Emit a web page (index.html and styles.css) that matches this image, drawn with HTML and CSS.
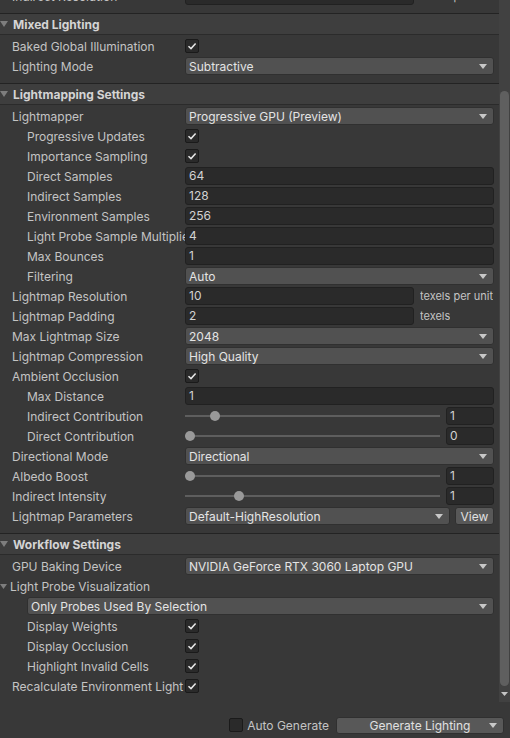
FILE: index.html
```html
<!DOCTYPE html>
<html>
<head>
<meta charset="utf-8">
<link rel="stylesheet" href="styles.css">
</head>
<body>
<div class="window">
  <div class="main">
    <div class="scrollview">
      <div class="content">
        <div class="row">
          <div class="label">Indirect Resolution</div>
          <div class="ctrl"><div class="field short">2</div><span class="unit">texels per unit</span></div>
        </div>

        <div class="header"><svg class="tri" width="8" height="6" viewBox="0 0 8 6"><path d="M0 0H8L4 6Z"/></svg>Mixed Lighting</div>
        <div class="row"><div class="label">Baked Global Illumination</div><div class="ctrl"><div class="check"><svg width="12" height="12" viewBox="0 0 12 12"><path d="M2.5 6.2L5 8.6L9.6 3.6"/></svg></div></div></div>
        <div class="row"><div class="label">Lighting Mode</div><div class="ctrl"><div class="dropdown"><span>Subtractive</span><svg class="arrow" width="8" height="5" viewBox="0 0 8 5"><path d="M0 0H8L4 5Z"/></svg></div></div></div>

        <div class="header"><svg class="tri" width="8" height="6" viewBox="0 0 8 6"><path d="M0 0H8L4 6Z"/></svg>Lightmapping Settings</div>
        <div class="row"><div class="label">Lightmapper</div><div class="ctrl"><div class="dropdown"><span>Progressive GPU (Preview)</span><svg class="arrow" width="8" height="5" viewBox="0 0 8 5"><path d="M0 0H8L4 5Z"/></svg></div></div></div>
        <div class="row"><div class="label ind">Progressive Updates</div><div class="ctrl"><div class="check"><svg width="12" height="12" viewBox="0 0 12 12"><path d="M2.5 6.2L5 8.6L9.6 3.6"/></svg></div></div></div>
        <div class="row"><div class="label ind">Importance Sampling</div><div class="ctrl"><div class="check"><svg width="12" height="12" viewBox="0 0 12 12"><path d="M2.5 6.2L5 8.6L9.6 3.6"/></svg></div></div></div>
        <div class="row"><div class="label ind">Direct Samples</div><div class="ctrl"><div class="field">64</div></div></div>
        <div class="row"><div class="label ind">Indirect Samples</div><div class="ctrl"><div class="field">128</div></div></div>
        <div class="row"><div class="label ind">Environment Samples</div><div class="ctrl"><div class="field">256</div></div></div>
        <div class="row"><div class="label ind">Light Probe Sample Multiplier</div><div class="ctrl"><div class="field">4</div></div></div>
        <div class="row"><div class="label ind">Max Bounces</div><div class="ctrl"><div class="field">1</div></div></div>
        <div class="row"><div class="label ind">Filtering</div><div class="ctrl"><div class="dropdown"><span>Auto</span><svg class="arrow" width="8" height="5" viewBox="0 0 8 5"><path d="M0 0H8L4 5Z"/></svg></div></div></div>
        <div class="row"><div class="label">Lightmap Resolution</div><div class="ctrl"><div class="field short">10</div><span class="unit">texels per unit</span></div></div>
        <div class="row"><div class="label">Lightmap Padding</div><div class="ctrl"><div class="field short">2</div><span class="unit">texels</span></div></div>
        <div class="row"><div class="label">Max Lightmap Size</div><div class="ctrl"><div class="dropdown"><span>2048</span><svg class="arrow" width="8" height="5" viewBox="0 0 8 5"><path d="M0 0H8L4 5Z"/></svg></div></div></div>
        <div class="row"><div class="label">Lightmap Compression</div><div class="ctrl"><div class="dropdown"><span>High Quality</span><svg class="arrow" width="8" height="5" viewBox="0 0 8 5"><path d="M0 0H8L4 5Z"/></svg></div></div></div>
        <div class="row"><div class="label">Ambient Occlusion</div><div class="ctrl"><div class="check"><svg width="12" height="12" viewBox="0 0 12 12"><path d="M2.5 6.2L5 8.6L9.6 3.6"/></svg></div></div></div>
        <div class="row"><div class="label ind">Max Distance</div><div class="ctrl"><div class="field">1</div></div></div>
        <div class="row"><div class="label ind">Indirect Contribution</div><div class="ctrl"><div class="slider"><div class="track"></div><div class="knob" style="--v:0.1"></div></div><div class="field value">1</div></div></div>
        <div class="row"><div class="label ind">Direct Contribution</div><div class="ctrl"><div class="slider"><div class="track"></div><div class="knob" style="--v:0"></div></div><div class="field value">0</div></div></div>
        <div class="row"><div class="label">Directional Mode</div><div class="ctrl"><div class="dropdown"><span>Directional</span><svg class="arrow" width="8" height="5" viewBox="0 0 8 5"><path d="M0 0H8L4 5Z"/></svg></div></div></div>
        <div class="row"><div class="label">Albedo Boost</div><div class="ctrl"><div class="slider"><div class="track"></div><div class="knob" style="--v:0"></div></div><div class="field value">1</div></div></div>
        <div class="row"><div class="label">Indirect Intensity</div><div class="ctrl"><div class="slider"><div class="track"></div><div class="knob" style="--v:0.2"></div></div><div class="field value">1</div></div></div>
        <div class="row"><div class="label">Lightmap Parameters</div><div class="ctrl"><div class="dropdown"><span>Default-HighResolution</span><svg class="arrow" width="8" height="5" viewBox="0 0 8 5"><path d="M0 0H8L4 5Z"/></svg></div><div class="btn view">View</div></div></div>

        <div class="header"><svg class="tri" width="8" height="6" viewBox="0 0 8 6"><path d="M0 0H8L4 6Z"/></svg>Workflow Settings</div>
        <div class="row"><div class="label">GPU Baking Device</div><div class="ctrl"><div class="dropdown"><span>NVIDIA GeForce RTX 3060 Laptop GPU</span><svg class="arrow" width="8" height="5" viewBox="0 0 8 5"><path d="M0 0H8L4 5Z"/></svg></div></div></div>
        <div class="row"><div class="foldout"><svg class="tri small" width="7" height="5" viewBox="0 0 7 5"><path d="M0 0H7L3.5 5Z"/></svg>Light Probe Visualization</div></div>
        <div class="row"><div class="ctrl wide"><div class="dropdown"><span>Only Probes Used By Selection</span><svg class="arrow" width="8" height="5" viewBox="0 0 8 5"><path d="M0 0H8L4 5Z"/></svg></div></div></div>
        <div class="row"><div class="label ind">Display Weights</div><div class="ctrl"><div class="check"><svg width="12" height="12" viewBox="0 0 12 12"><path d="M2.5 6.2L5 8.6L9.6 3.6"/></svg></div></div></div>
        <div class="row"><div class="label ind">Display Occlusion</div><div class="ctrl"><div class="check"><svg width="12" height="12" viewBox="0 0 12 12"><path d="M2.5 6.2L5 8.6L9.6 3.6"/></svg></div></div></div>
        <div class="row"><div class="label ind">Highlight Invalid Cells</div><div class="ctrl"><div class="check"><svg width="12" height="12" viewBox="0 0 12 12"><path d="M2.5 6.2L5 8.6L9.6 3.6"/></svg></div></div></div>
        <div class="row"><div class="label">Recalculate Environment Light</div><div class="ctrl"><div class="check"><svg width="12" height="12" viewBox="0 0 12 12"><path d="M2.5 6.2L5 8.6L9.6 3.6"/></svg></div></div></div>
      </div>
    </div>
    <div class="scrollbar">
      <div class="thumb"></div>
      <svg class="sarrow" width="7" height="4" viewBox="0 0 7 4"><path d="M0 0H7L3.5 4Z"/></svg>
    </div>
  </div>
  <div class="bottombar">
    <div class="check empty"></div>
    <span class="autogen">Auto Generate</span>
    <div class="btn generate"><span class="spacer"></span><span class="gtext">Generate Lighting</span><svg class="arrow" width="8" height="5" viewBox="0 0 8 5"><path d="M0 0H8L4 5Z"/></svg></div>
  </div>
</div>
</body>
</html>
```

FILE: styles.css
```css
* { box-sizing: border-box; }
html, body { margin: 0; padding: 0; }
body {
  background: #383838;
  font-family: Inter, "Noto Sans", sans-serif;
  font-size: 12px;
  color: #c4c4c4;
  width: 510px;
  height: 738px;
  overflow: hidden;
}
.window { display: flex; flex-direction: column; height: 738px; }
.main { display: flex; height: 702px; flex: none; }
.scrollview { flex: 1; overflow: hidden; }
.content { margin-top: -14px; }

.scrollbar {
  width: 11px;
  flex: none;
  background: #414141;
  display: flex;
  flex-direction: column;
  align-items: center;
}
.thumb {
  margin-top: 91px;
  width: 9px;
  height: 595px;
  background: #5f5f5f;
  border-radius: 5px;
}
.sarrow { margin-top: 6px; fill: #c4c4c4; }

.row { display: flex; align-items: center; height: 20px; }
.label {
  width: 185px;
  flex: none;
  padding-left: 12px;
  padding-right: 1px;
  white-space: nowrap;
  overflow: hidden;
}
.label.ind { padding-left: 27px; }
.ctrl { flex: 1; display: flex; align-items: center; margin-right: 5px; min-width: 0; }
.ctrl.wide { margin-left: 27px; }

.field {
  flex: 1;
  height: 18px;
  background: #2a2a2a;
  border: 1px solid #212121;
  border-radius: 3px;
  color: #d2d2d2;
  padding: 0 3px;
  line-height: 16px;
  white-space: nowrap;
}
.field.short { flex: none; width: 229px; }
.field.value { flex: none; width: 48px; margin-left: 6px; }
.unit { margin-left: 6px; white-space: nowrap; font-size: 11px; overflow: hidden; }

.dropdown {
  flex: 1;
  height: 18px;
  background: #515151;
  border: 1px solid #303030;
  border-radius: 3px;
  color: #e4e4e4;
  padding: 0 6px 0 3px;
  display: flex;
  align-items: center;
  justify-content: space-between;
  white-space: nowrap;
}
.arrow { fill: #c8c8c8; flex: none; }

.btn {
  height: 18px;
  background: #585858;
  border: 1px solid #303030;
  border-radius: 3px;
  color: #e0e0e0;
  display: flex;
  align-items: center;
  justify-content: center;
}
.btn.view { width: 39px; margin-left: 5px; flex: none; }

.check {
  width: 14px;
  height: 14px;
  background: #2a2a2a;
  border: 1px solid #1a1a1a;
  border-radius: 2px;
  display: flex;
  align-items: center;
  justify-content: center;
  flex: none;
}
.check svg path { fill: none; stroke: #e6e6e6; stroke-width: 1.5; }

.slider {
  flex: 1;
  height: 12px;
  position: relative;
  display: flex;
  align-items: center;
}
.track { flex: 1; height: 2px; background: #5e5e5e; }
.knob {
  position: absolute;
  top: 1px;
  left: calc((100% - 10px) * var(--v));
  width: 10px;
  height: 10px;
  border-radius: 50%;
  background: #999999;
}

.header {
  margin-top: 7px;
  margin-bottom: 1px;
  height: 22px;
  border-top: 1px solid #232323;
  border-bottom: 1px solid #2b2b2b;
  background: #3e3e3e;
  display: flex;
  align-items: center;
  font-weight: bold;
  color: #d4d4d4;
}
.tri { fill: #7e7e7e; margin-left: 0; margin-right: 5px; flex: none; }
.foldout { display: flex; align-items: center; white-space: nowrap; }
.tri.small { margin-right: 3px; }

.bottombar {
  flex: 1;
  display: flex;
  align-items: flex-end;
  justify-content: flex-end;
  padding: 0 6px 4px 0;
}
.bottombar .check { margin-bottom: 2px; }
.autogen { margin-left: 4px; margin-right: 7px; line-height: 17px; }
.btn.generate { width: 168px; height: 17px; justify-content: space-between; padding: 0 6px; }
.spacer { width: 8px; }
```
